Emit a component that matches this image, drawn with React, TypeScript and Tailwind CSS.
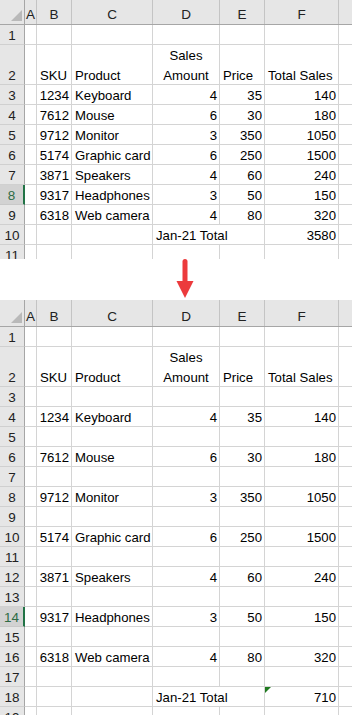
type Cell = {
  t?: string;
  a?: "l" | "r" | "c";
  spill?: boolean;
  tri?: boolean;
  wrap?: [string, string];
};

type RowData = {
  label: string;
  tall?: boolean;
  sel?: boolean;
  cells: Cell[];
};

const COLS = "grid grid-cols-[25px_12px_35px_81px_67px_45px_74px_1fr]";

const products = [
  ["1234", "Keyboard", "4", "35", "140"],
  ["7612", "Mouse", "6", "30", "180"],
  ["9712", "Monitor", "3", "350", "1050"],
  ["5174", "Graphic card", "6", "250", "1500"],
  ["3871", "Speakers", "4", "60", "240"],
  ["9317", "Headphones", "3", "50", "150"],
  ["6318", "Web camera", "4", "80", "320"],
];

const empty: Cell[] = [{}, {}, {}, {}, {}, {}, {}];

const headerRow: Cell[] = [
  {},
  { t: "SKU" },
  { t: "Product" },
  { wrap: ["Sales", "Amount"], a: "c" },
  { t: "Price" },
  { t: "Total Sales" },
  {},
];

const dataRow = (p: string[]): Cell[] => [
  {},
  { t: p[0], a: "r" },
  { t: p[1] },
  { t: p[2], a: "r" },
  { t: p[3], a: "r" },
  { t: p[4], a: "r" },
  {},
];

// F18 in the lower sheet carries Excel's green error marker
const totalRow = (v: string, tri: boolean): Cell[] => [
  {},
  {},
  {},
  { t: "Jan-21 Total", spill: true },
  {},
  { t: v, a: "r", tri },
  {},
];

const topRows: RowData[] = [
  { label: "1", cells: empty },
  { label: "2", tall: true, cells: headerRow },
  ...products.map((p, i) => ({
    label: String(i + 3),
    sel: i + 3 === 8,
    cells: dataRow(p),
  })),
  { label: "10", cells: totalRow("3580", false) },
  { label: "11", cells: empty },
];

const bottomRows: RowData[] = [
  { label: "1", cells: empty },
  { label: "2", tall: true, cells: headerRow },
];
products.forEach((p, i) => {
  bottomRows.push({ label: String(3 + i * 2), cells: empty });
  bottomRows.push({ label: String(4 + i * 2), sel: 4 + i * 2 === 14, cells: dataRow(p) });
});
bottomRows.push({ label: "17", cells: empty });
bottomRows.push({ label: "18", cells: totalRow("710", true) });
bottomRows.push({ label: "19", cells: empty });

function ColumnHeader({ tall }: { tall?: boolean }) {
  const letters = ["A", "B", "C", "D", "E", "F", ""];
  return (
    <div className={`${COLS} ${tall ? "h-[27px]" : "h-[25px]"} bg-[#e6e6e6] border-b border-[#a6a6a6]`}>
      <div className="relative border-r border-[#a6a6a6]">
        <svg className="absolute right-[2px] bottom-[3px]" width="11" height="11" viewBox="0 0 11 11">
          <polygon points="11,0 11,11 0,11" fill="#b9b9b9" />
        </svg>
      </div>
      {letters.map((l, i) => (
        <div
          key={i}
          className={`flex items-end justify-center pb-[2px] leading-[14px] text-[13.5px] text-[#222] ${
            i < 6 ? "border-r border-[#c4c4c4]" : ""
          }`}
        >
          {l}
        </div>
      ))}
    </div>
  );
}

function SheetRow({ row }: { row: RowData }) {
  return (
    <div className={`${COLS} ${row.tall ? "h-10" : "h-5"}`}>
      <div
        className={`flex items-end justify-center border-b leading-[14px] pb-[1px] text-[13.5px] ${
          row.sel
            ? "bg-[#d2d2d2] border-[#c8c8c8] text-[#2f6b45] border-r-2 border-r-[#217346]"
            : "bg-[#e6e6e6] border-[#d0d0d0] text-[#222] border-r border-r-[#a6a6a6]"
        }`}
      >
        {row.label}
      </div>
      {row.cells.map((c, i) => {
        const align =
          c.a === "r" ? "justify-end pr-[2px]" : c.a === "c" ? "justify-center text-center" : "justify-start pl-[3px]";
        const rightBorder = c.spill || i === 6 ? "" : "border-r";
        return (
          <div
            key={i}
            className={`relative flex items-end whitespace-nowrap border-b border-[#d4d4d4] ${rightBorder} ${align} text-[13.2px] leading-[14px] pb-[1px] text-black`}
          >
            {c.tri && (
              <svg className="absolute left-0 top-0" width="6" height="6" viewBox="0 0 6 6">
                <polygon points="0,0 6,0 0,6" fill="#1f7a1f" />
              </svg>
            )}
            {c.wrap ? (
              <div className="flex flex-col items-center">
                <span className="mb-[6px]">{c.wrap[0]}</span>
                <span>{c.wrap[1]}</span>
              </div>
            ) : (
              <span className={c.spill ? "relative z-10" : ""}>{c.t}</span>
            )}
          </div>
        );
      })}
    </div>
  );
}

function Sheet({ rows, tall, height }: { rows: RowData[]; tall?: boolean; height: string }) {
  return (
    <div className={`${height} overflow-hidden bg-white`}>
      <ColumnHeader tall={tall} />
      {rows.map((r) => (
        <SheetRow key={r.label} row={r} />
      ))}
    </div>
  );
}

export default function App() {
  return (
    <div
      className="w-[352px] h-[715px] overflow-hidden bg-white"
      style={{ fontFamily: '"Liberation Sans", Arial, sans-serif' }}
    >
      <Sheet rows={topRows} height="h-[259px]" />
      <div className="h-[41px] flex items-start pl-[176px]">
        <svg width="18" height="40" viewBox="0 0 18 40">
          <rect x="6.5" y="0" width="5" height="26" rx="2.5" fill="#ec3a3c" />
          <polygon points="0.5,22 17.5,22 9,39" fill="#ec3a3c" />
        </svg>
      </div>
      <Sheet rows={bottomRows} tall height="h-[415px]" />
    </div>
  );
}
